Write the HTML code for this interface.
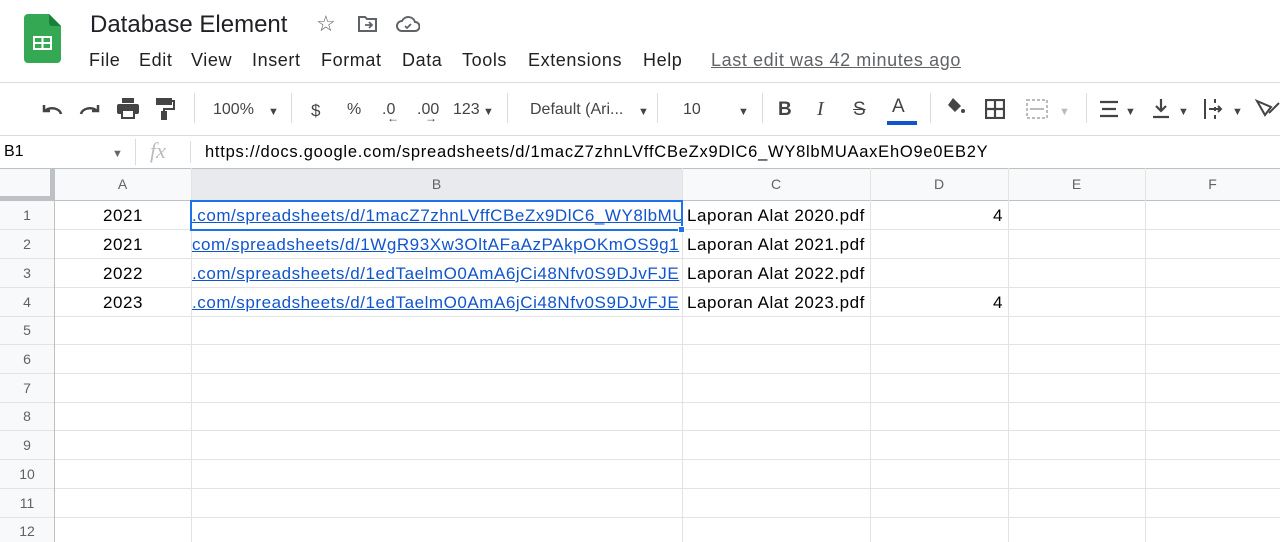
<!DOCTYPE html>
<html><head><meta charset="utf-8"><style>
*{margin:0;padding:0;box-sizing:border-box}
body{width:1280px;height:542px;overflow:hidden;background:#fff;font-family:"Liberation Sans",sans-serif;position:relative;color:#202124}
.a{position:absolute;white-space:nowrap}
.menu{top:50px;font-size:18px;color:#202124;letter-spacing:.6px}
.tb{top:101px;font-size:16px;color:#444}
.ic{position:absolute}
.hl{position:absolute;left:0;width:1280px;height:1px;background:#e2e3e3}
.vl{position:absolute;top:168px;width:1px;height:374px;background:#e2e3e3}
.rn{position:absolute;left:0;width:54px;text-align:center;font-size:14px;color:#5f6368}
.cell{position:absolute;font-size:17px;color:#000;letter-spacing:.55px}
.lnk{color:#1155cc;text-decoration:underline}
</style></head><body>
<svg class="ic" style="left:24px;top:14px" width="37" height="49" viewBox="0 0 37 49">
<path d="M4 0H25L37 12V45a4 4 0 0 1-4 4H4a4 4 0 0 1-4-4V4a4 4 0 0 1 4-4z" fill="#34a853"/>
<path d="M25 0L37 12H28a3 3 0 0 1-3-3z" fill="#188038"/>
<rect x="9" y="22" width="19" height="14" fill="#fff"/>
<rect x="11" y="24" width="6.5" height="4" fill="#34a853"/><rect x="19.5" y="24" width="6.5" height="4" fill="#34a853"/>
<rect x="11" y="30" width="6.5" height="4" fill="#34a853"/><rect x="19.5" y="30" width="6.5" height="4" fill="#34a853"/>
</svg>
<div class="a" style="left:90px;top:11px;font-size:24px;color:#202124">Database Element</div>
<div class="a" style="left:316px;top:11px;font-size:22px;color:#5f6368">☆</div>
<svg class="ic" style="left:357px;top:14px" width="22" height="20" viewBox="0 0 22 20"><path d="M2 3h6l2 2h9v12H2z" fill="none" stroke="#5f6368" stroke-width="2"/><path d="M8 11h7M12 8l3 3-3 3" fill="none" stroke="#5f6368" stroke-width="1.8"/></svg>
<svg class="ic" style="left:396px;top:14px" width="24" height="20" viewBox="0 0 24 20"><path d="M6 17a5 5 0 0 1 0-10 7 7 0 0 1 13 1 4.5 4.5 0 0 1 0 9z" fill="none" stroke="#5f6368" stroke-width="2"/><path d="M9 12l2 2 4-4" fill="none" stroke="#5f6368" stroke-width="1.8"/></svg>
<div class="a menu" style="left:89px">File</div>
<div class="a menu" style="left:139px">Edit</div>
<div class="a menu" style="left:191px">View</div>
<div class="a menu" style="left:252px">Insert</div>
<div class="a menu" style="left:321px">Format</div>
<div class="a menu" style="left:402px">Data</div>
<div class="a menu" style="left:462px">Tools</div>
<div class="a menu" style="left:528px">Extensions</div>
<div class="a menu" style="left:643px">Help</div>
<div class="a menu" style="left:711px;color:#5f6368;text-decoration:underline">Last edit was 42 minutes ago</div>
<div class="hl" style="top:82px;background:#dadce0"></div>
<svg class="ic" style="left:40px;top:99px" width="24" height="20" viewBox="0 0 24 20"><path d="M4 6v6h6" fill="none" stroke="#444" stroke-width="2.5"/><path d="M5 12a9 7 0 0 1 16 3" fill="none" stroke="#444" stroke-width="2.5"/></svg>
<svg class="ic" style="left:78px;top:99px" width="24" height="20" viewBox="0 0 24 20"><path d="M20 6v6h-6" fill="none" stroke="#444" stroke-width="2.5"/><path d="M19 12a9 7 0 0 0-16 3" fill="none" stroke="#444" stroke-width="2.5"/></svg>
<svg class="ic" style="left:116px;top:97px" width="24" height="22" viewBox="0 0 24 22"><rect x="6" y="1" width="12" height="5" fill="#444"/><rect x="1" y="7" width="22" height="10" rx="2" fill="#444"/><rect x="6" y="13" width="12" height="8" fill="#fff" stroke="#444" stroke-width="2"/></svg>
<svg class="ic" style="left:155px;top:97px" width="20" height="24" viewBox="0 0 20 24"><rect x="1" y="1" width="16" height="7" fill="#444"/><path d="M17 4h2v8H9v3" fill="none" stroke="#444" stroke-width="2"/><rect x="6" y="14" width="6" height="9" fill="#444"/></svg>
<div class="ic" style="left:194px;top:93px;width:1px;height:30px;background:#dadce0"></div>
<div class="a tb" style="left:213px">100%</div><div class="a tb" style="left:268px;font-size:11px;top:106px">▼</div>
<div class="ic" style="left:291px;top:93px;width:1px;height:30px;background:#dadce0"></div>
<div class="a tb" style="left:311px;font-size:17px">$</div>
<div class="a tb" style="left:347px">%</div>
<div class="a tb" style="left:382px">.0</div><div class="a" style="left:387px;top:111px;font-size:12px;color:#444">←</div>
<div class="a tb" style="left:417px">.00</div><div class="a" style="left:425px;top:111px;font-size:12px;color:#444">→</div>
<div class="a tb" style="left:453px">123</div><div class="a tb" style="left:483px;font-size:11px;top:106px">▼</div>
<div class="ic" style="left:507px;top:93px;width:1px;height:30px;background:#dadce0"></div>
<div class="a tb" style="left:530px">Default (Ari...</div><div class="a tb" style="left:638px;font-size:11px;top:106px">▼</div>
<div class="ic" style="left:657px;top:93px;width:1px;height:30px;background:#dadce0"></div>
<div class="a tb" style="left:683px">10</div><div class="a tb" style="left:738px;font-size:11px;top:106px">▼</div>
<div class="ic" style="left:762px;top:93px;width:1px;height:30px;background:#dadce0"></div>
<div class="a tb" style="left:778px;font-size:19px;font-weight:bold;top:99px">B</div>
<div class="a tb" style="left:817px;font-size:20px;font-style:italic;font-family:'Liberation Serif',serif;top:98px">I</div>
<div class="a tb" style="left:853px;font-size:19px;text-decoration:line-through;top:99px">S</div>
<div class="a tb" style="left:892px;font-size:19px;top:96px">A</div>
<div class="ic" style="left:887px;top:121px;width:30px;height:4px;background:#1155cc"></div>
<div class="ic" style="left:930px;top:93px;width:1px;height:30px;background:#dadce0"></div>
<svg class="ic" style="left:944px;top:97px" width="22" height="20" viewBox="0 0 22 20"><path d="M9 1l8 8-6 6-7-7z" fill="#444"/><circle cx="19" cy="14" r="2" fill="#444"/></svg>
<svg class="ic" style="left:985px;top:99px" width="20" height="20" viewBox="0 0 20 20"><rect x="1" y="1" width="18" height="18" fill="none" stroke="#444" stroke-width="2.2"/><path d="M10 1v18M1 10h18" stroke="#444" stroke-width="2.2"/></svg>
<svg class="ic" style="left:1026px;top:99px" width="22" height="20" viewBox="0 0 22 20"><rect x="1" y="1" width="20" height="18" fill="none" stroke="#bbb" stroke-width="2" stroke-dasharray="3 2"/><path d="M4 10h14" stroke="#bbb" stroke-width="2"/></svg>
<div class="a tb" style="left:1059px;font-size:11px;top:106px;color:#bbb">▼</div>
<div class="ic" style="left:1086px;top:93px;width:1px;height:30px;background:#dadce0"></div>
<svg class="ic" style="left:1099px;top:100px" width="20" height="18" viewBox="0 0 20 18"><path d="M1 2h18M3 9h14M1 16h18" stroke="#444" stroke-width="2.2"/></svg>
<div class="a tb" style="left:1125px;font-size:11px;top:106px">▼</div>
<svg class="ic" style="left:1151px;top:98px" width="20" height="22" viewBox="0 0 20 22"><path d="M10 1v12M5 8l5 5 5-5M2 19h16" fill="none" stroke="#444" stroke-width="2.2"/></svg>
<div class="a tb" style="left:1178px;font-size:11px;top:106px">▼</div>
<svg class="ic" style="left:1203px;top:98px" width="22" height="22" viewBox="0 0 22 22"><path d="M2 1v20M12 1v4M12 9v4M12 17v4M6 11h12M15 8l3 3-3 3" fill="none" stroke="#444" stroke-width="2"/></svg>
<div class="a tb" style="left:1232px;font-size:11px;top:106px">▼</div>
<svg class="ic" style="left:1255px;top:98px" width="25" height="20" viewBox="0 0 25 20"><path d="M2 3l14 6-6 8z" fill="none" stroke="#444" stroke-width="2"/><path d="M14 15L24 5" stroke="#444" stroke-width="2"/></svg>
<div class="hl" style="top:135px;background:#dadce0"></div>
<div class="a" style="left:4px;top:143px;font-size:16px;color:#000">B1</div>
<div class="a" style="left:112px;top:148px;font-size:11px;color:#666">▼</div>
<div class="ic" style="left:135px;top:139px;width:1px;height:26px;background:#dadce0"></div>
<div class="a" style="left:150px;top:138px;font-size:22px;color:#bbb;font-style:italic;font-family:'Liberation Serif',serif">fx</div>
<div class="ic" style="left:190px;top:141px;width:1px;height:22px;background:#dadce0"></div>
<div class="a" style="left:205px;top:143px;font-size:16.5px;color:#000;letter-spacing:.75px">https://docs.google.com/spreadsheets/d/1macZ7zhnLVffCBeZx9DlC6_WY8lbMUAaxEhO9e0EB2Y</div>
<div class="hl" style="top:168px;background:#c0c0c0"></div>
<div class="ic" style="left:0;top:169px;width:1280px;height:31px;background:#f8f9fa"></div>
<div class="ic" style="left:191px;top:169px;width:491px;height:31px;background:#e8eaed"></div>
<div class="ic" style="left:0;top:169px;width:54px;height:31px;background:#f8f9fa;border-right:4px solid #bdc1c6;border-bottom:4px solid #bdc1c6"></div>
<div class="ic" style="left:0;top:200px;width:54px;height:342px;background:#f8f9fa"></div>
<div class="a" style="left:54px;width:137px;text-align:center;top:176px;font-size:14px;color:#5f6368">A</div>
<div class="a" style="left:191px;width:491px;text-align:center;top:176px;font-size:14px;color:#5f6368">B</div>
<div class="a" style="left:682px;width:188px;text-align:center;top:176px;font-size:14px;color:#5f6368">C</div>
<div class="a" style="left:870px;width:138px;text-align:center;top:176px;font-size:14px;color:#5f6368">D</div>
<div class="a" style="left:1008px;width:137px;text-align:center;top:176px;font-size:14px;color:#5f6368">E</div>
<div class="a" style="left:1145px;width:135px;text-align:center;top:176px;font-size:14px;color:#5f6368">F</div>
<div class="hl" style="top:200px;background:#c0c0c0"></div>
<div class="hl" style="top:229px"></div><div class="hl" style="top:258px"></div><div class="hl" style="top:287px"></div>
<div class="hl" style="top:316px"></div><div class="hl" style="top:344px"></div><div class="hl" style="top:373px"></div>
<div class="hl" style="top:402px"></div><div class="hl" style="top:430px"></div><div class="hl" style="top:459px"></div>
<div class="hl" style="top:488px"></div><div class="hl" style="top:517px"></div>
<div class="vl" style="left:54px;background:#c0c0c0"></div>
<div class="vl" style="left:191px"></div><div class="vl" style="left:682px"></div><div class="vl" style="left:870px"></div>
<div class="vl" style="left:1008px"></div><div class="vl" style="left:1145px"></div>
<div class="rn" style="top:207px">1</div><div class="rn" style="top:236px">2</div><div class="rn" style="top:265px">3</div>
<div class="rn" style="top:294px">4</div><div class="rn" style="top:322px">5</div><div class="rn" style="top:351px">6</div>
<div class="rn" style="top:380px">7</div><div class="rn" style="top:408px">8</div><div class="rn" style="top:437px">9</div>
<div class="rn" style="top:466px">10</div><div class="rn" style="top:495px">11</div><div class="rn" style="top:523px">12</div>
<div class="cell" style="left:103px;top:206px">2021</div>
<div class="cell" style="left:103px;top:235px">2021</div>
<div class="cell" style="left:103px;top:264px">2022</div>
<div class="cell" style="left:103px;top:293px">2023</div>
<div class="cell" style="left:192px;top:206px;width:489px;overflow:hidden"><span class="lnk">.com/spreadsheets/d/1macZ7zhnLVffCBeZx9DlC6_WY8lbMUAaxEhO9e0EB2Y</span></div>
<div class="cell" style="left:192px;top:235px;width:489px;overflow:hidden"><span class="lnk">com/spreadsheets/d/1WgR93Xw3OltAFaAzPAkpOKmOS9g1</span></div>
<div class="cell" style="left:192px;top:264px;width:489px;overflow:hidden"><span class="lnk">.com/spreadsheets/d/1edTaelmO0AmA6jCi48Nfv0S9DJvFJE</span></div>
<div class="cell" style="left:192px;top:293px;width:489px;overflow:hidden"><span class="lnk">.com/spreadsheets/d/1edTaelmO0AmA6jCi48Nfv0S9DJvFJE</span></div>
<div class="cell" style="left:687px;top:206px">Laporan Alat 2020.pdf</div>
<div class="cell" style="left:687px;top:235px">Laporan Alat 2021.pdf</div>
<div class="cell" style="left:687px;top:264px">Laporan Alat 2022.pdf</div>
<div class="cell" style="left:687px;top:293px">Laporan Alat 2023.pdf</div>
<div class="cell" style="left:993px;top:206px">4</div>
<div class="cell" style="left:993px;top:293px">4</div>
<div class="ic" style="left:190px;top:200px;width:493px;height:31px;border:2px solid #1a73e8"></div>
<div class="ic" style="left:678px;top:226px;width:7px;height:7px;background:#1a73e8;border:1px solid #fff"></div>
</body></html>
